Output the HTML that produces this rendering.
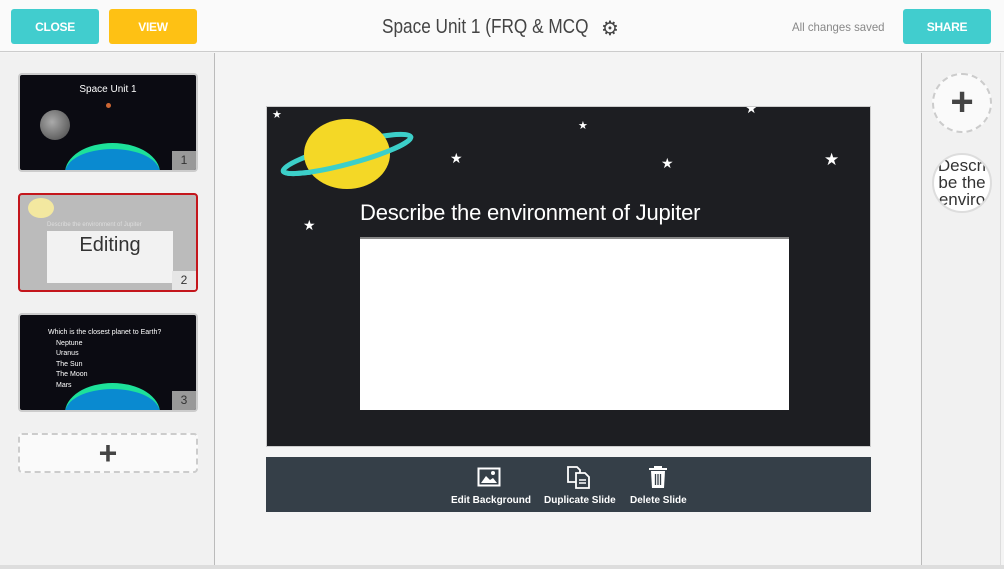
<!DOCTYPE html>
<html><head><style>
*{margin:0;padding:0;box-sizing:border-box}
body{width:1004px;height:569px;overflow:hidden;background:#f4f4f4;font-family:"Liberation Sans",sans-serif;position:relative}
.abs{position:absolute}
.btn{position:absolute;top:9px;height:35px;border-radius:3px;color:#fff;font-weight:bold;font-size:12px;display:flex;align-items:center;justify-content:center;letter-spacing:-0.3px}
.thumb{position:absolute;left:18px;width:180px;height:99px;border:2px solid #ccc;border-radius:4px;background:#0b0b12;overflow:hidden}
.num{position:absolute;right:0;bottom:0;width:24px;height:19px;background:#999;color:#333;font-size:12px;text-align:center;line-height:19px}
.star{position:absolute;color:#fff;font-size:14px;line-height:1}
</style></head><body>
<div class="abs" style="left:0;top:0;width:1004px;height:52px;background:#fafafa;border-bottom:1px solid #ccc"></div>
<div class="btn" style="left:11px;width:88px;background:#41cdce">CLOSE</div>
<div class="btn" style="left:109px;width:88px;background:#fec114">VIEW</div>
<div class="abs" style="left:382px;top:16px;font-size:20px;color:#444;transform:scaleX(0.86);transform-origin:left;white-space:nowrap">Space Unit 1 (FRQ &amp; MCQ</div>
<div class="abs" style="left:601px;top:16px;font-size:20px;color:#444">⚙</div>
<div class="abs" style="left:792px;top:20px;font-size:12px;color:#888;transform:scaleX(0.95);transform-origin:left">All changes saved</div>
<div class="btn" style="left:903px;width:88px;background:#41cdce">SHARE</div>
<div class="abs" style="left:0;top:53px;width:215px;height:513px;background:#f1f1f1;border-right:1px solid #bbb"></div>
<div class="abs" style="left:921px;top:53px;width:80px;height:513px;background:#f1f1f1;border-left:1px solid #bbb;border-right:1px solid #ddd"></div>
<div class="abs" style="left:0;top:565px;width:1004px;height:4px;background:#ddd"></div>

<div class="thumb" style="top:73px">
 <div class="abs" style="left:0;width:100%;top:9px;text-align:center;color:#fff;font-size:10px">Space Unit 1</div>
 <div class="abs" style="left:20px;top:35px;width:30px;height:30px;border-radius:50%;background:radial-gradient(circle at 40% 40%,#aaa,#444)"></div>
 <div class="abs" style="left:86px;top:28px;width:5px;height:5px;border-radius:50%;background:#c63"></div>
 <div class="abs" style="left:45px;top:68px;width:95px;height:60px;border-radius:50%;background:#0a8ad0;border-top:6px solid #1de19a"></div>
 <div class="num">1</div>
</div>
<div class="thumb" style="top:193px;border-color:#c4161c;background:#bbb">
 <div class="abs" style="left:8px;top:3px;width:26px;height:20px;border-radius:50%;background:#f3e8a0"></div>
 <div class="abs" style="left:27px;top:27px;font-size:6px;color:#ddd">Describe the environment of Jupiter</div>
 <div class="abs" style="left:27px;top:36px;width:126px;height:52px;background:#f2f2f2;text-align:center;font-size:20px;color:#333;padding-top:3px">Editing</div>
 <div class="num" style="background:#e6e6e6">2</div>
</div>
<div class="thumb" style="top:313px">
 <div class="abs" style="left:28px;top:13px;font-size:7px;color:#fff;line-height:10.5px">Which is the closest planet to Earth?<br><span style="padding-left:8px">Neptune</span><br><span style="padding-left:8px">Uranus</span><br><span style="padding-left:8px">The Sun</span><br><span style="padding-left:8px">The Moon</span><br><span style="padding-left:8px">Mars</span></div>
 <div class="abs" style="left:45px;top:68px;width:95px;height:60px;border-radius:50%;background:#0a8ad0;border-top:6px solid #1de19a"></div>
 <div class="num">3</div>
</div>
<div class="abs" style="left:18px;top:433px;width:180px;height:40px;border:2px dashed #ccc;border-radius:4px;background:#fafafa;text-align:center;font-size:32px;font-weight:bold;color:#444;line-height:36px">+</div>

<div class="abs" style="left:932px;top:73px;width:60px;height:60px;border:2px dashed #ccc;border-radius:50%;background:#fafafa;text-align:center;font-size:40px;font-weight:bold;color:#444;line-height:54px">+</div>
<div class="abs" style="left:932px;top:153px;width:60px;height:60px;border:2px solid #ddd;border-radius:50%;background:#fff;overflow:hidden;font-size:17px;line-height:17px;color:#333;text-align:center;padding-top:2px">Descri be the enviro nm</div>

<div class="abs" style="left:266px;top:106px;width:605px;height:341px;background:#1d1e22;border:1px solid #ccc;overflow:hidden">
 <svg class="abs" style="left:0;top:0" width="160" height="100">
  <ellipse cx="80" cy="47" rx="66" ry="10" transform="rotate(-15 80 47)" fill="none" stroke="#3ccfc9" stroke-width="5"/>
  <ellipse cx="80" cy="47" rx="43" ry="35" fill="#f4d826"/>
  <path d="M14.5 64.5 A66 10 0 0 0 145.5 29.5" transform="rotate(0)" fill="none" stroke="#3ccfc9" stroke-width="5" style="display:none"/>
  <g transform="rotate(-15 80 47)"><path d="M14 47 A66 10 0 0 0 146 47" fill="none" stroke="#3ccfc9" stroke-width="5"/></g>
 </svg>
 <div class="star" style="left:5px;top:3px;font-size:11px">★</div>
 <div class="star" style="left:478px;top:-6px">★</div>
 <div class="star" style="left:311px;top:14px;font-size:11px">★</div>
 <div class="star" style="left:183px;top:44px">★</div>
 <div class="star" style="left:394px;top:49px">★</div>
 <div class="star" style="left:557px;top:44px;font-size:17px">★</div>
 <div class="star" style="left:36px;top:111px">★</div>
 <div class="abs" style="left:93px;top:93px;color:#fff;font-size:22px;letter-spacing:-0.2px">Describe the environment of Jupiter</div>
 <div class="abs" style="left:93px;top:130px;width:429px;height:173px;background:#fff;border-top:2px solid #888"></div>
</div>

<div class="abs" style="left:266px;top:457px;width:605px;height:55px;background:#353f48;color:#fff;font-size:10px;font-weight:bold">
 <svg class="abs" style="left:211px;top:10px" width="24" height="20"><rect x="1.5" y="1.5" width="21" height="17" fill="none" stroke="#fff" stroke-width="2"/><path d="M4 16 L9 9 L13 13 L16 11 L20 16Z" fill="#fff"/><circle cx="16" cy="6" r="2" fill="#fff"/></svg>
 <svg class="abs" style="left:300px;top:8px" width="26" height="24"><path d="M2 2h9l3 3v12H2z" fill="none" stroke="#fff" stroke-width="1.8"/><path d="M10 8h9l4 4v11H10z" fill="#353f48" stroke="#fff" stroke-width="1.8"/><path d="M13 15h7M13 18h7" stroke="#fff" stroke-width="1.5"/></svg>
 <svg class="abs" style="left:382px;top:8px" width="20" height="24"><path d="M1 4h18M7 4V2h6v2" stroke="#fff" stroke-width="2" fill="none"/><path d="M3 6h14l-1 17H4z" fill="#fff"/><path d="M7.5 9v11M10 9v11M12.5 9v11" stroke="#353f48" stroke-width="1.3"/></svg>
 <div class="abs" style="left:185px;top:38px">Edit Background</div>
 <div class="abs" style="left:278px;top:38px">Duplicate Slide</div>
 <div class="abs" style="left:364px;top:38px">Delete Slide</div>
</div>
</body></html>
